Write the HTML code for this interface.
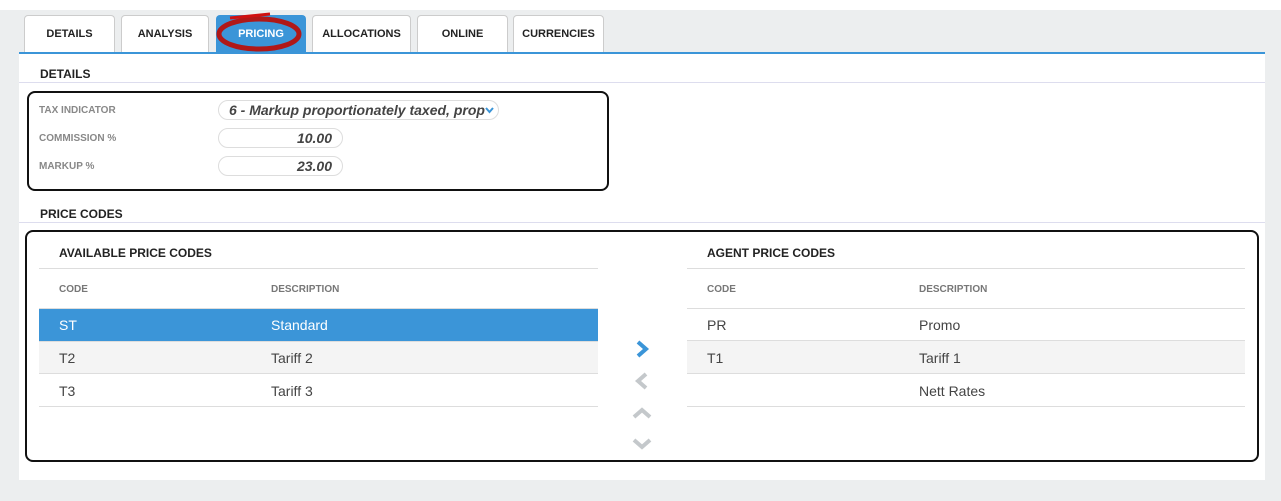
<!DOCTYPE html>
<html><head><style>
*{box-sizing:border-box;margin:0;padding:0}
body{width:1281px;height:501px;background:#fff;font-family:"Liberation Sans",sans-serif;position:relative;overflow:hidden}
.bg{position:absolute;left:0;top:10px;width:1281px;height:491px;background:#eceeef}
.panel{position:absolute;left:19px;top:52px;width:1246px;height:428px;background:#fff;border-top:2px solid #3b95d8}
.tab{position:absolute;top:15px;height:37px;background:#fff;border:1px solid #ccc;border-bottom:none;border-radius:4px 4px 0 0;font-size:11px;font-weight:bold;color:#222;text-align:center;line-height:37px}
.tab.act{background:#3b95d8;color:#fff;border-color:#3b95d8}
.h{position:absolute;left:40px;font-size:12px;font-weight:bold;color:#222}
.hl{position:absolute;left:19px;width:1246px;height:1px;background:#dde}
.box{position:absolute;border:2px solid #111;border-radius:8px}
.lbl{position:absolute;left:39px;font-size:10px;font-weight:bold;color:#888}
.inp{position:absolute;left:218px;height:20px;border:1px solid #ddd;border-radius:10px;font-size:14px;font-style:italic;font-weight:bold;color:#444;line-height:18px}
.t{position:absolute;font-size:14px;color:#444}
.row{position:absolute;height:33px;border-bottom:1px solid #ddd}
.th{position:absolute;font-size:10px;font-weight:bold;color:#777}
</style></head><body>
<div class="bg"></div>
<div class="panel"></div>
<div class="tab" style="left:24px;width:91px">DETAILS</div>
<div class="tab" style="left:121px;width:88px">ANALYSIS</div>
<div class="tab act" style="left:216px;width:90px">PRICING</div>
<div class="tab" style="left:312px;width:99px">ALLOCATIONS</div>
<div class="tab" style="left:417px;width:91px">ONLINE</div>
<div class="tab" style="left:513px;width:91px">CURRENCIES</div>
<svg style="position:absolute;left:210px;top:8px" width="100" height="52"><ellipse cx="49" cy="26" rx="40" ry="15" fill="none" stroke="#b01818" stroke-width="5"/><path d="M20 10 L60 6" stroke="#d01010" stroke-width="3"/></svg>
<div class="h" style="top:67px">DETAILS</div>
<div class="hl" style="top:82px"></div>
<div class="box" style="left:27px;top:91px;width:582px;height:100px"></div>
<div class="lbl" style="top:105px">TAX INDICATOR</div>
<div class="lbl" style="top:133px">COMMISSION %</div>
<div class="lbl" style="top:161px">MARKUP %</div>
<div class="inp" style="top:100px;width:281px;padding-left:10px;overflow:hidden;white-space:nowrap">6 - Markup proportionately taxed, prop<svg style="position:absolute;right:4px;top:6px;background:#fff" width="9" height="7"><path d="M1 1 L4.5 5 L8 1" fill="none" stroke="#3b95d8" stroke-width="2"/></svg></div>
<div class="inp" style="top:128px;width:125px;text-align:right;padding-right:10px">10.00</div>
<div class="inp" style="top:156px;width:125px;text-align:right;padding-right:10px">23.00</div>
<div class="h" style="top:207px">PRICE CODES</div>
<div class="hl" style="top:222px"></div>
<div class="box" style="left:25px;top:230px;width:1234px;height:232px"></div>
<div class="h" style="left:59px;top:246px">AVAILABLE PRICE CODES</div>
<div class="h" style="left:707px;top:246px">AGENT PRICE CODES</div>
<div class="row" style="left:39px;top:236px;width:559px"></div>
<div class="row" style="left:687px;top:236px;width:558px"></div>
<div class="row" style="left:39px;top:269px;width:559px;height:40px"></div>
<div class="row" style="left:687px;top:269px;width:558px;height:40px"></div>
<div class="th" style="left:59px;top:284px">CODE</div><div class="th" style="left:271px;top:284px">DESCRIPTION</div>
<div class="th" style="left:707px;top:284px">CODE</div><div class="th" style="left:919px;top:284px">DESCRIPTION</div>
<div class="row" style="left:39px;top:309px;width:559px;background:#3b95d8;border:none;height:32px"></div>
<div class="row" style="left:39px;top:341px;width:559px;background:#f4f4f4;border-top:1px solid #ddd"></div>
<div class="row" style="left:39px;top:374px;width:559px"></div>
<div class="row" style="left:687px;top:308px;width:558px"></div>
<div class="row" style="left:687px;top:341px;width:558px;background:#f4f4f4"></div>
<div class="row" style="left:687px;top:374px;width:558px"></div>
<div class="t" style="left:59px;top:317px;color:#fff">ST</div><div class="t" style="left:271px;top:317px;color:#fff">Standard</div>
<div class="t" style="left:59px;top:350px">T2</div><div class="t" style="left:271px;top:350px">Tariff 2</div>
<div class="t" style="left:59px;top:383px">T3</div><div class="t" style="left:271px;top:383px">Tariff 3</div>
<div class="t" style="left:707px;top:317px">PR</div><div class="t" style="left:919px;top:317px">Promo</div>
<div class="t" style="left:707px;top:350px">T1</div><div class="t" style="left:919px;top:350px">Tariff 1</div>
<div class="t" style="left:919px;top:383px">Nett Rates</div>
<svg style="position:absolute;left:630px;top:338px" width="26" height="116">
<path d="M8 4 L16 11 L8 18" fill="none" stroke="#3b95d8" stroke-width="4"/>
<path d="M16 36 L8 43 L16 50" fill="none" stroke="#c4c8cb" stroke-width="4"/>
<path d="M4 79 L12 72 L20 79" fill="none" stroke="#c4c8cb" stroke-width="4"/>
<path d="M4 102 L12 109 L20 102" fill="none" stroke="#c4c8cb" stroke-width="4"/>
</svg>
</body></html>
